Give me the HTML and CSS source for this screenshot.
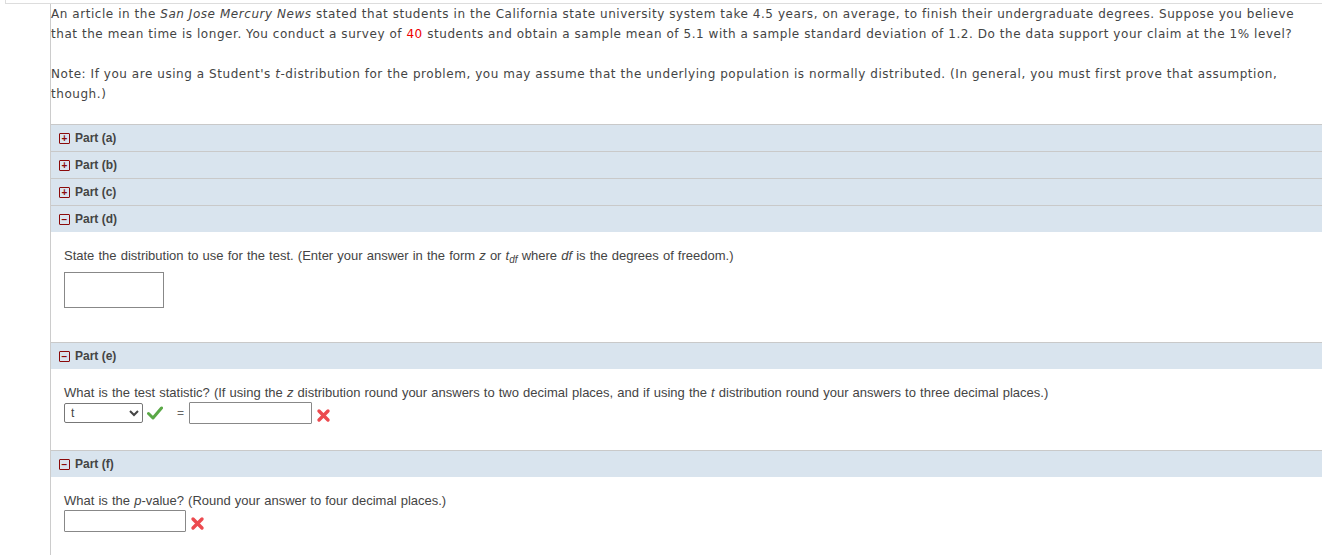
FILE: index.html
```html
<!DOCTYPE html>
<html lang="en">
<head>
  <meta charset="UTF-8" />
  <title>Hypothesis Test - Part (f)</title>
  <link rel="stylesheet" href="styles.css">
</head>
<body>
  <div class="top-edge"></div>
  <div class="question">
    <p class="intro">An article in the <em>San Jose Mercury News</em> stated that students in the California state university system take 4.5 years, on average, to finish their undergraduate degrees. Suppose you believe that the mean time is longer. You conduct a survey of <span class="num">40</span> students and obtain a sample mean of 5.1 with a sample standard deviation of 1.2. Do the data support your claim at the 1% level?</p>
    <p class="intro">Note: If you are using a Student's <em>t</em>-distribution for the problem, you may assume that the underlying population is normally distributed. (In general, you must first prove that assumption, though.)</p>

    <div class="parts">
      <div class="part-head"><span class="toggle">+</span>Part (a)</div>
      <div class="part-head"><span class="toggle">+</span>Part (b)</div>
      <div class="part-head"><span class="toggle">+</span>Part (c)</div>

      <div class="part-head"><span class="toggle">&minus;</span>Part (d)</div>
      <div class="part-body body-d">
        <div class="ask">State the distribution to use for the test. (Enter your answer in the form <em>z</em> or <em>t</em><sub><em>df</em></sub> where <em>df</em> is the degrees of freedom.)</div>
        <input type="text" class="big-box" />
      </div>

      <div class="part-head"><span class="toggle">&minus;</span>Part (e)</div>
      <div class="part-body body-e">
        <div class="ask">What is the test statistic? (If using the <em>z</em> distribution round your answers to two decimal places, and if using the <em>t</em> distribution round your answers to three decimal places.)</div>
        <div class="answer-row">
          <select class="dist">
            <option>t</option>
            <option>z</option>
          </select>
          <svg class="mark check" width="16" height="14" viewBox="0 0 16 14">
            <path d="M1.5 7.5 L6 12 L14.5 2" fill="none" stroke="#5aa846" stroke-width="3" stroke-linejoin="round" stroke-linecap="round"/>
          </svg>
          <span class="eq">=</span>
          <input type="text" class="ans" />
          <svg class="mark cross" width="15" height="15" viewBox="0 0 15 15">
            <path d="M3 3 L12 12 M12 3 L3 12" fill="none" stroke="#ec4a4f" stroke-width="3.4" stroke-linecap="round"/>
          </svg>
        </div>
      </div>

      <div class="part-head"><span class="toggle">&minus;</span>Part (f)</div>
      <div class="part-body body-f">
        <div class="ask">What is the <em>p</em>-value? (Round your answer to four decimal places.)</div>
        <div class="answer-row">
          <input type="text" class="ans ans-wide" />
          <svg class="mark cross" width="15" height="15" viewBox="0 0 15 15">
            <path d="M3 3 L12 12 M12 3 L3 12" fill="none" stroke="#ec4a4f" stroke-width="3.4" stroke-linecap="round"/>
          </svg>
        </div>
      </div>
    </div>
  </div>
</body>
</html>
```

FILE: styles.css
```css
body {
  margin: 0;
  background: #fff;
  font-family: "Liberation Sans", Arial, sans-serif;
  color: #444;
  overflow: hidden;
}
.top-edge {
  margin-left: 5px;
  height: 3px;
  border-left: 1px solid #ddd;
  border-bottom: 1px solid #ddd;
}
.question {
  margin-left: 50px;
  border-left: 1px solid #ccc;
  min-height: 560px;
}
.intro {
  margin: 0 0 20px 0;
  padding-right: 20px;
  font-family: "DejaVu Sans", Verdana, sans-serif;
  font-size: 12px;
  letter-spacing: 0.55px;
  line-height: 20px;
  color: #444;
}
.num {
  color: #e00;
}
.parts {
  border-top: 1px solid #c9c9c9;
}
.part-head {
  height: 26px;
  display: flex;
  align-items: center;
  padding-left: 8px;
  background: #d9e4ee;
  border-top: 1px solid #c9c9c9;
  font-size: 12px;
  font-weight: bold;
  color: #444;
}
.parts .part-head:first-child {
  border-top: none;
}
.toggle {
  width: 9px;
  height: 9px;
  border: 1px solid #8b0a0a;
  border-radius: 1px;
  margin-right: 5px;
  display: flex;
  align-items: center;
  justify-content: center;
  font-size: 10px;
  line-height: 9px;
  color: #8b0a0a;
  font-weight: bold;
}
.part-body {
  padding: 16px 13px 0 13px;
  font-size: 13px;
}
.ask {
  line-height: 16px;
  word-spacing: 0.5px;
  color: #444;
}
.ask sub {
  font-size: 10px;
  vertical-align: -3px;
  line-height: 0;
}
.body-d {
  height: 94px;
}
.body-e {
  height: 65px;
}
.body-f {
  height: 70px;
}
.big-box {
  display: block;
  margin-top: 8px;
  width: 100px;
  height: 36px;
  box-sizing: border-box;
  border: 1px solid #888;
}
.answer-row {
  display: flex;
  align-items: center;
  margin-top: 1px;
  height: 22px;
}
.dist {
  width: 79px;
  height: 20px;
  font-family: "Liberation Sans", Arial, sans-serif;
  font-size: 12px;
  border: 1px solid #777;
  border-radius: 2px;
  padding: 0 2px;
  background: #fff;
  color: #444;
}
.check {
  margin-left: 4px;
}
.eq {
  margin-left: 14px;
  margin-right: 5px;
  font-size: 12px;
  color: #666;
}
.ans {
  width: 123px;
  height: 22px;
  box-sizing: border-box;
  border: 1px solid #888;
  border-radius: 1px;
}
.ans-wide {
  width: 122px;
}
.cross {
  margin-left: 4px;
  margin-top: 4px;
}
```
